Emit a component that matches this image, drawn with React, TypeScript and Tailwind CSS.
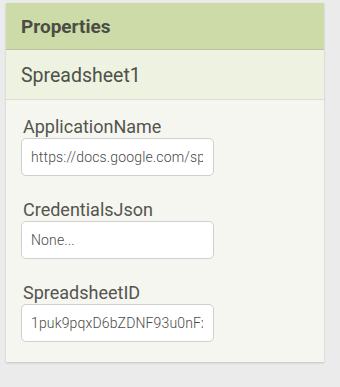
const fields = [
  { name: "ApplicationName", value: "https://docs.google.com/spreadsheets" },
  { name: "CredentialsJson", value: "None..." },
  { name: "SpreadsheetID", value: "1puk9pqxD6bZDNF93u0nFxyz" },
];

function PropertyField({ name, value }: { name: string; value: string }) {
  return (
    <div className="flex flex-col">
      <div className="h-[22px] pl-[2px] text-[18px] leading-[22px] text-[#54544e]">{name}</div>
      <input
        readOnly
        value={value}
        className="h-[38px] w-[193px] rounded-[5px] border border-[#cfcfcf] bg-white pl-[9px] pr-[10px] text-[14px] font-light tracking-[0.15px] text-[#4a4a46] outline-none"
      />
    </div>
  );
}

export default function App() {
  return (
    <div
      className="h-[387px] w-[340px] bg-[#ebebeb] pl-[6px] pt-[3px]"
      style={{ fontFamily: "Roboto, 'Noto Sans', sans-serif" }}
    >
      <div className="w-[318px] bg-[#f6f6f1] shadow-[0_1px_2px_rgba(0,0,0,0.18)]">
        <div className="flex h-[47px] items-center border-b border-[#b9c3a3] bg-[#ccdba7] pl-[15px] pt-[2px] text-[19px] font-bold text-[#4b4c44]">
          Properties
        </div>
        <div className="flex h-[50px] items-center border-b border-[#dcdcd2] bg-[#eef2e0] pl-[15px] pt-[2px] text-[19.5px] text-[#4f504a]">
          Spreadsheet1
        </div>
        <div className="flex flex-col gap-[23px] pl-[15px] pt-[16px] pb-[20px]">
          {fields.map((f) => (
            <PropertyField key={f.name} {...f} />
          ))}
        </div>
      </div>
    </div>
  );
}
